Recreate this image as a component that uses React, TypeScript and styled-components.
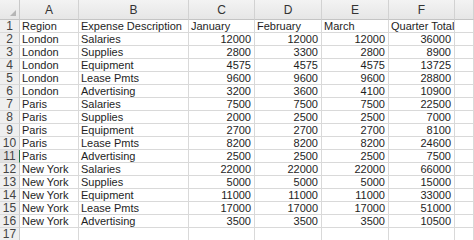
import React from "react";
import styled, { createGlobalStyle } from "styled-components";

const GlobalStyle = createGlobalStyle`
  html, body {
    margin: 0;
    padding: 0;
    background: #ffffff;
    overflow: hidden;
  }
  body {
    font-family: "Liberation Sans", Arial, sans-serif;
  }
`;

const COLS = ["A", "B", "C", "D", "E", "F", ""];

const rows: (string | number)[][] = [
  ["Region", "Expense Description", "January", "February", "March", "Quarter Total"],
  ["London", "Salaries", 12000, 12000, 12000, 36000],
  ["London", "Supplies", 2800, 3300, 2800, 8900],
  ["London", "Equipment", 4575, 4575, 4575, 13725],
  ["London", "Lease Pmts", 9600, 9600, 9600, 28800],
  ["London", "Advertising", 3200, 3600, 4100, 10900],
  ["Paris", "Salaries", 7500, 7500, 7500, 22500],
  ["Paris", "Supplies", 2000, 2500, 2500, 7000],
  ["Paris", "Equipment", 2700, 2700, 2700, 8100],
  ["Paris", "Lease Pmts", 8200, 8200, 8200, 24600],
  ["Paris", "Advertising", 2500, 2500, 2500, 7500],
  ["New York", "Salaries", 22000, 22000, 22000, 66000],
  ["New York", "Supplies", 5000, 5000, 5000, 15000],
  ["New York", "Equipment", 11000, 11000, 11000, 33000],
  ["New York", "Lease Pmts", 17000, 17000, 17000, 51000],
  ["New York", "Advertising", 3500, 3500, 3500, 10500],
  ["", "", "", "", "", ""],
];

const Sheet = styled.div`
  display: grid;
  grid-template-columns: 20px 59px 110px 66px 67px 67px 66px 1fr;
  grid-template-rows: 20px repeat(17, 13px);
  width: 474px;
  height: 240px;
  overflow: hidden;
  font-size: 11px;
  color: #1e1e1e;
`;

const Corner = styled.div`
  position: relative;
  background: linear-gradient(#f3f3f3, #e6e6e6);
  border-right: 1px solid #c9c9c9;
  border-bottom: 1px solid #c4c4c4;
  box-sizing: border-box;
`;

const CornerMark = styled.div`
  position: absolute;
  right: 3px;
  bottom: 3px;
  width: 0;
  height: 0;
  border-left: 6px solid transparent;
  border-bottom: 6px solid #b5b5b5;
`;

const ColHead = styled.div`
  display: flex;
  align-items: flex-end;
  justify-content: center;
  padding-bottom: 2px;
  background: linear-gradient(#f3f3f3, #e6e6e6);
  border-right: 1px solid #d2d2d2;
  border-bottom: 1px solid #c4c4c4;
  box-sizing: border-box;
  color: #333;
  font-size: 12px;
  line-height: 13px;
`;

const RowHead = styled.div<{ $active?: boolean }>`
  display: flex;
  align-items: center;
  justify-content: center;
  background: ${(p) => (p.$active ? "#e2e2e2" : "#efefef")};
  border-right: 1px solid ${(p) => (p.$active ? "#217346" : "#c9c9c9")};
  border-bottom: 1px solid #dadada;
  box-sizing: border-box;
  color: #444;
  font-size: 12px;
  line-height: 12px;
`;

const Cell = styled.div<{ $num?: boolean }>`
  display: flex;
  align-items: center;
  justify-content: ${(p) => (p.$num ? "flex-end" : "flex-start")};
  padding: 0 3px 0 2px;
  border-right: 1px solid #d9d9d9;
  border-bottom: 1px solid #d9d9d9;
  box-sizing: border-box;
  white-space: nowrap;
  overflow: hidden;
  line-height: 12px;
`;

export default function App() {
  return (
    <>
      <GlobalStyle />
      <Sheet>
        <Corner>
          <CornerMark />
        </Corner>
        {COLS.map((c, i) => (
          <ColHead key={i}>{c}</ColHead>
        ))}
        {rows.map((r, ri) => (
          <React.Fragment key={ri}>
            <RowHead $active={ri === 10}>{ri + 1}</RowHead>
            {r.map((v, ci) => (
              <Cell key={ci} $num={typeof v === "number"}>
                {v}
              </Cell>
            ))}
            <Cell />
          </React.Fragment>
        ))}
      </Sheet>
    </>
  );
}
